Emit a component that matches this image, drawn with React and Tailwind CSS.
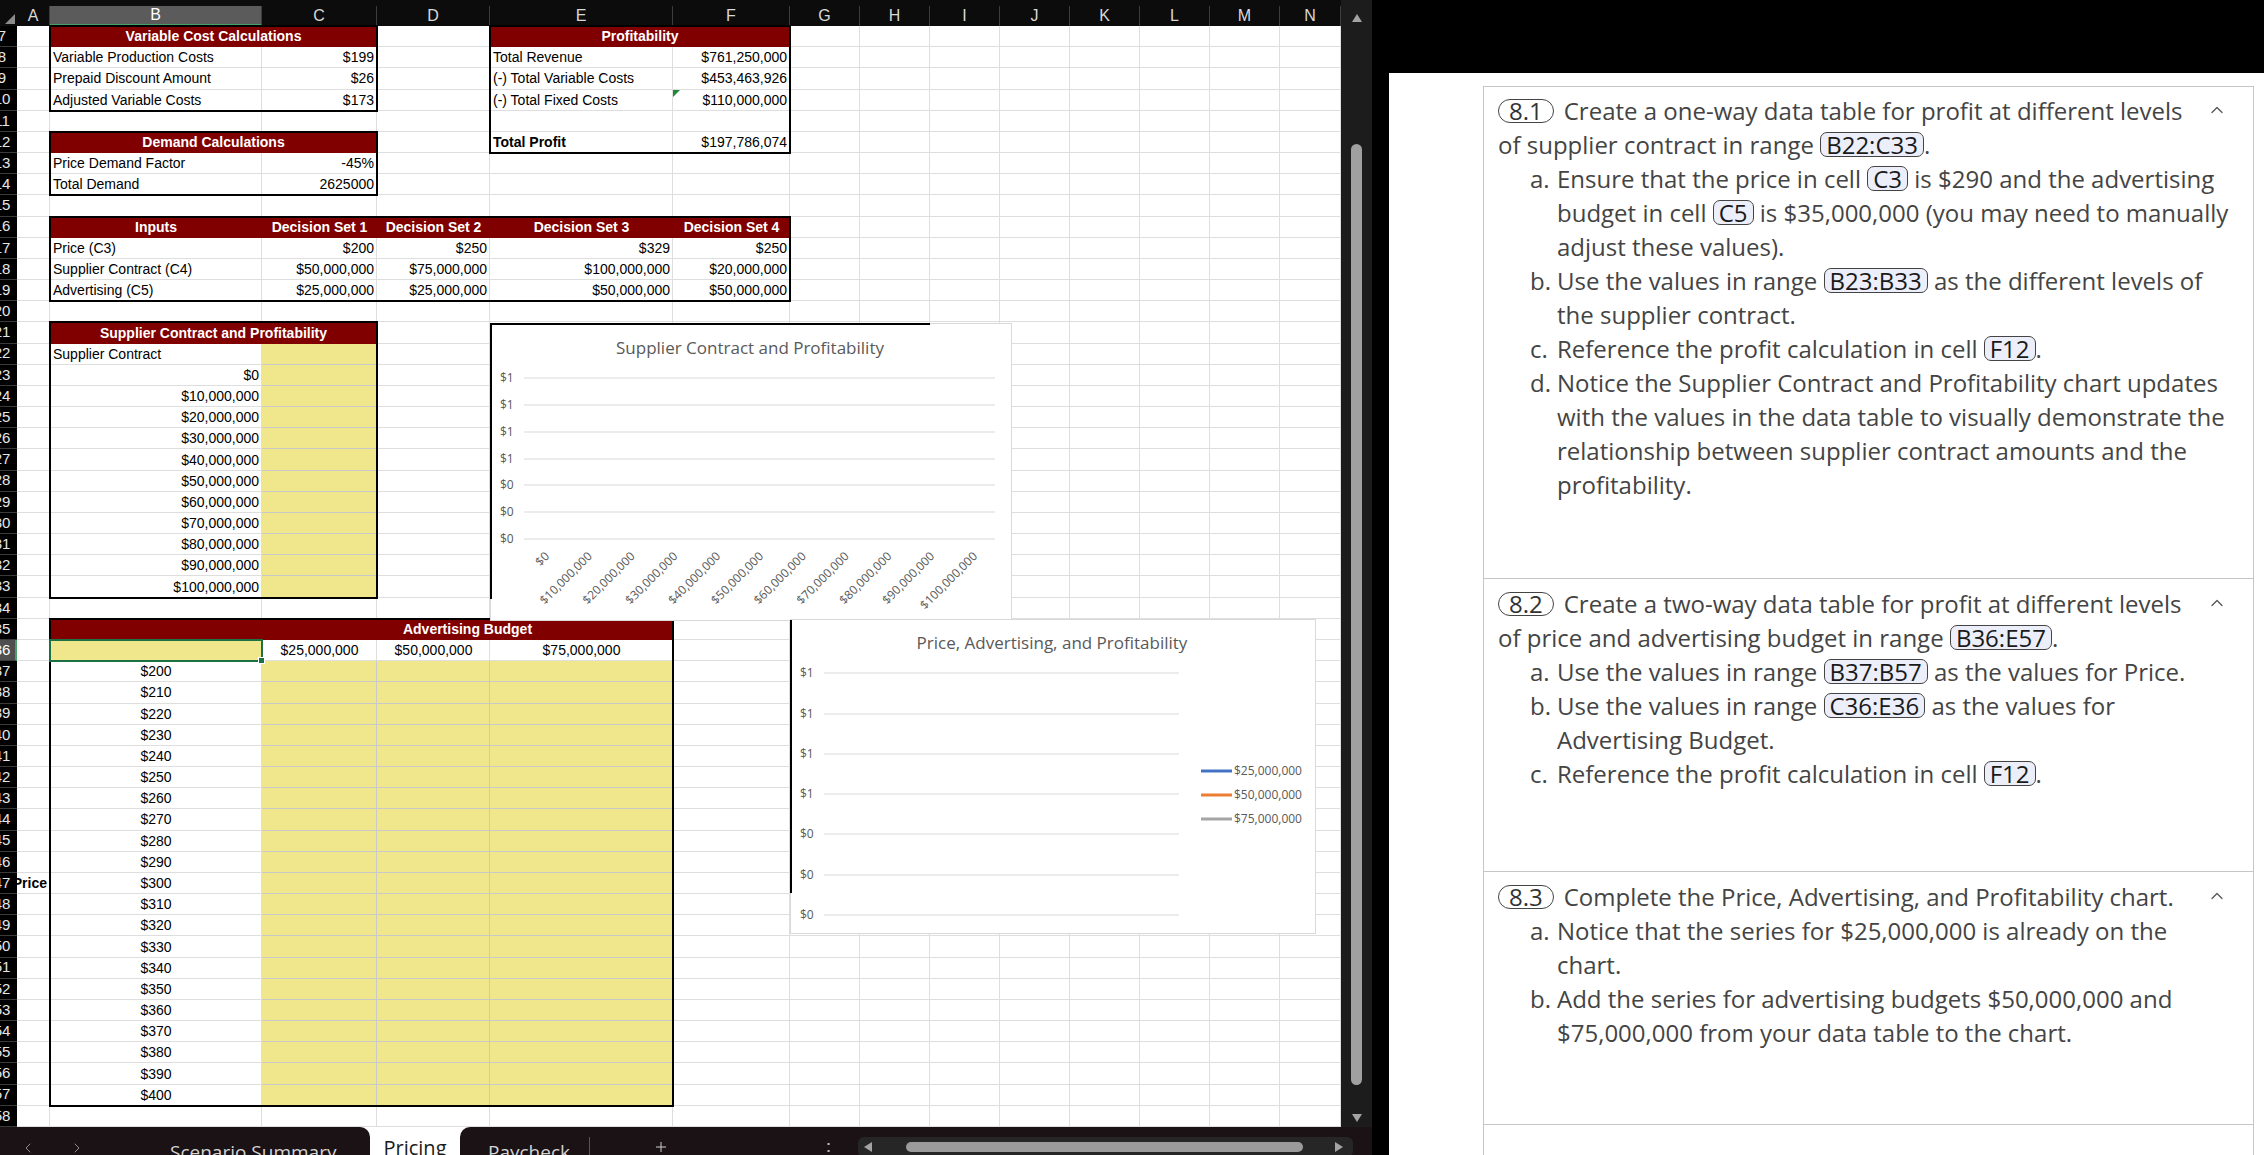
import React from 'react';
import { ChevronUp, ChevronLeft, ChevronRight, Plus } from 'lucide-react';

const COLS = ['A', 'B', 'C', 'D', 'E', 'F', 'G', 'H', 'I', 'J', 'K', 'L', 'M', 'N'];
const COL_W = {
  A: 'w-[33px]', B: 'w-[212px]', C: 'w-[115px]', D: 'w-[113px]', E: 'w-[183px]', F: 'w-[117px]',
  G: 'w-[70px]', H: 'w-[70px]', I: 'w-[70px]', J: 'w-[70px]', K: 'w-[70px]', L: 'w-[70px]', M: 'w-[70px]', N: 'w-[61px]',
};
const COL_START = {
  A: 'col-start-2', B: 'col-start-3', C: 'col-start-4', D: 'col-start-5', E: 'col-start-6', F: 'col-start-7',
  G: 'col-start-8', H: 'col-start-9', I: 'col-start-10', J: 'col-start-11', K: 'col-start-12', L: 'col-start-13',
  M: 'col-start-14', N: 'col-start-15',
};
const ROW_START = [
  'row-start-1', 'row-start-2', 'row-start-3', 'row-start-4', 'row-start-5', 'row-start-6', 'row-start-7',
  'row-start-8', 'row-start-9', 'row-start-10', 'row-start-11', 'row-start-12', 'row-start-13', 'row-start-14',
  'row-start-15', 'row-start-16', 'row-start-17', 'row-start-18', 'row-start-19', 'row-start-20', 'row-start-21',
  'row-start-22', 'row-start-23', 'row-start-24', 'row-start-25', 'row-start-26', 'row-start-27', 'row-start-28',
  'row-start-29', 'row-start-30', 'row-start-31', 'row-start-32', 'row-start-33', 'row-start-34', 'row-start-35',
  'row-start-36', 'row-start-37', 'row-start-38', 'row-start-39', 'row-start-40', 'row-start-41', 'row-start-42',
  'row-start-43', 'row-start-44', 'row-start-45', 'row-start-46', 'row-start-47', 'row-start-48', 'row-start-49',
  'row-start-50', 'row-start-51', 'row-start-52',
];
const rs = (r) => ROW_START[r - 7];
const ROWS = Array.from({ length: 52 }, (_, i) => i + 7);
const GRID =
  'grid grid-cols-[17px_33px_212px_115px_113px_183px_117px_70px_70px_70px_70px_70px_70px_70px_61px] grid-rows-[repeat(52,minmax(0,1fr))]';

const ALIGN = { l: 'justify-start pl-[3px]', r: 'justify-end pr-[3px]', c: 'justify-center' };

const CELLS = [
  { r: 8, c: 'B', t: 'Variable Production Costs' },
  { r: 8, c: 'C', t: '$199', a: 'r' },
  { r: 9, c: 'B', t: 'Prepaid Discount Amount' },
  { r: 9, c: 'C', t: '$26', a: 'r' },
  { r: 10, c: 'B', t: 'Adjusted Variable Costs' },
  { r: 10, c: 'C', t: '$173', a: 'r' },
  { r: 8, c: 'E', t: 'Total Revenue' },
  { r: 8, c: 'F', t: '$761,250,000', a: 'r' },
  { r: 9, c: 'E', t: '(-) Total Variable Costs' },
  { r: 9, c: 'F', t: '$453,463,926', a: 'r' },
  { r: 10, c: 'E', t: '(-) Total Fixed Costs' },
  { r: 10, c: 'F', t: '$110,000,000', a: 'r' },
  { r: 12, c: 'E', t: 'Total Profit', b: true },
  { r: 12, c: 'F', t: '$197,786,074', a: 'r' },
  { r: 13, c: 'B', t: 'Price Demand Factor' },
  { r: 13, c: 'C', t: '-45%', a: 'r' },
  { r: 14, c: 'B', t: 'Total Demand' },
  { r: 14, c: 'C', t: '2625000', a: 'r' },
  { r: 16, c: 'B', t: 'Inputs', a: 'c', h: true },
  { r: 16, c: 'C', t: 'Decision Set 1', a: 'c', h: true },
  { r: 16, c: 'D', t: 'Decision Set 2', a: 'c', h: true },
  { r: 16, c: 'E', t: 'Decision Set 3', a: 'c', h: true },
  { r: 16, c: 'F', t: 'Decision Set 4', a: 'c', h: true },
  { r: 17, c: 'B', t: 'Price (C3)' },
  { r: 17, c: 'C', t: '$200', a: 'r' },
  { r: 17, c: 'D', t: '$250', a: 'r' },
  { r: 17, c: 'E', t: '$329', a: 'r' },
  { r: 17, c: 'F', t: '$250', a: 'r' },
  { r: 18, c: 'B', t: 'Supplier Contract (C4)' },
  { r: 18, c: 'C', t: '$50,000,000', a: 'r' },
  { r: 18, c: 'D', t: '$75,000,000', a: 'r' },
  { r: 18, c: 'E', t: '$100,000,000', a: 'r' },
  { r: 18, c: 'F', t: '$20,000,000', a: 'r' },
  { r: 19, c: 'B', t: 'Advertising (C5)' },
  { r: 19, c: 'C', t: '$25,000,000', a: 'r' },
  { r: 19, c: 'D', t: '$25,000,000', a: 'r' },
  { r: 19, c: 'E', t: '$50,000,000', a: 'r' },
  { r: 19, c: 'F', t: '$50,000,000', a: 'r' },
  { r: 22, c: 'B', t: 'Supplier Contract' },
  { r: 36, c: 'C', t: '$25,000,000', a: 'c' },
  { r: 36, c: 'D', t: '$50,000,000', a: 'c' },
  { r: 36, c: 'E', t: '$75,000,000', a: 'c' },
  { r: 47, c: 'A', t: 'Price', a: 'r', b: true },
];
for (let i = 0; i <= 10; i++) {
  CELLS.push({ r: 23 + i, c: 'B', t: i === 0 ? '$0' : `$${i * 10},000,000`, a: 'r' });
}
for (let i = 0; i <= 20; i++) {
  CELLS.push({ r: 37 + i, c: 'B', t: `$${200 + i * 10}`, a: 'c' });
}

const YELLOW = [];
for (let r = 22; r <= 33; r++) YELLOW.push({ r, c: 'C' });
YELLOW.push({ r: 36, c: 'B' });
for (let r = 37; r <= 57; r++) ['C', 'D', 'E'].forEach((c) => YELLOW.push({ r, c }));

const Tri = ({ down }) => (
  <svg width="12" height="10" viewBox="0 0 12 10">
    <path d={down ? 'M1 1h10L6 9z' : 'M6 1l5 8H1z'} fill="#a3a3a3" />
  </svg>
);

function SupplierChart() {
  const ys = [55, 82, 109, 136, 162, 189, 216];
  const yl = ['$1', '$1', '$1', '$1', '$0', '$0', '$0'];
  const xl = ['$0', '$10,000,000', '$20,000,000', '$30,000,000', '$40,000,000', '$50,000,000', '$60,000,000', '$70,000,000', '$80,000,000', '$90,000,000', '$100,000,000'];
  return (
    <div className="col-start-6 col-span-7 row-start-15 row-span-14 self-start justify-self-start mt-[1px] w-[522px] h-[298px] bg-white">
      <svg width="522" height="298" className="block" fontFamily="'Open Sans', sans-serif">
        <rect x="0.5" y="0.5" width="521" height="297" fill="white" stroke="#d9d9d9" />
        <line x1="0" y1="1" x2="440" y2="1" stroke="#000" strokeWidth="2" />
        <line x1="1" y1="0" x2="1" y2="276" stroke="#000" strokeWidth="2" />
        <text x="260" y="31" textAnchor="middle" fontSize="17" fill="#595959">Supplier Contract and Profitability</text>
        {ys.map((y, i) => (
          <g key={i}>
            <line x1="34" x2="505" y1={y} y2={y} stroke="#d9d9d9" />
            <text x="10" y={y + 4} fontSize="12" fill="#595959">{yl[i]}</text>
          </g>
        ))}
        {xl.map((t, i) => {
          const x = 60 + i * 42.8;
          return (
            <text key={i} x={x} y={234} textAnchor="end" fontSize="12" fill="#595959" transform={`rotate(-45 ${x} 234)`}>{t}</text>
          );
        })}
      </svg>
    </div>
  );
}

function PriceChart() {
  const ys = [54, 95, 135, 175, 215, 256, 296];
  const yl = ['$1', '$1', '$1', '$1', '$0', '$0', '$0'];
  const legend = [['#4472c4', '$25,000,000'], ['#ed7d31', '$50,000,000'], ['#a5a5a5', '$75,000,000']];
  return (
    <div className="col-start-8 col-span-8 row-start-29 row-span-16 self-start justify-self-start w-[526px] h-[315px] bg-white">
      <svg width="526" height="315" className="block" fontFamily="'Open Sans', sans-serif">
        <rect x="0.5" y="0.5" width="525" height="314" fill="white" stroke="#d9d9d9" />
        <line x1="1" y1="1" x2="1" y2="274" stroke="#000" strokeWidth="2" />
        <text x="262" y="30" textAnchor="middle" fontSize="17" fill="#595959">Price, Advertising, and Profitability</text>
        {ys.map((y, i) => (
          <g key={i}>
            <line x1="34" x2="389" y1={y} y2={y} stroke="#d9d9d9" />
            <text x="10" y={y + 4} fontSize="12" fill="#595959">{yl[i]}</text>
          </g>
        ))}
        {legend.map(([col, t], i) => (
          <g key={t}>
            <line x1="411" x2="442" y1={152 + i * 24} y2={152 + i * 24} stroke={col} strokeWidth="3" />
            <text x="444" y={156 + i * 24} fontSize="12" fill="#595959">{t}</text>
          </g>
        ))}
      </svg>
    </div>
  );
}

const Badge = ({ children }) => (
  <span className="inline-block rounded-full border-[1.5px] border-[#444] bg-white px-[10px] leading-[22px] text-[#333] mr-[10px]">{children}</span>
);
const Ref = ({ children }) => (
  <span className="inline-block rounded-[7px] border-[1.5px] border-[#444] bg-[#eceff9] px-[5px] leading-[23px] text-[#1a1a1a]">{children}</span>
);

const Item = ({ m, children }) => (
  <div className="flex ml-[32px]">
    <span className="w-[27px] shrink-0">{m}</span>
    <p className="flex-1">{children}</p>
  </div>
);

const Title = ({ n, children }) => (
  <div className="flex">
    <p className="flex-1">
      <Badge>{n}</Badge>
      {children}
    </p>
    <div className="w-[44px] -mr-[8px] flex justify-center pt-[6px] text-[#555]">
      <ChevronUp size={20} strokeWidth={1.5} />
    </div>
  </div>
);

export default function App() {
  return (
    <div className="flex w-[2264px] h-[1155px] overflow-hidden bg-black">
      {/* spreadsheet */}
      <div className="w-[1372px] shrink-0 flex flex-col">
        <div className="flex h-[1127px]">
          <div className="w-[1341px] flex flex-col font-['Liberation_Sans',Arial,sans-serif]">
            <div className="flex h-[26px] bg-[#0c0c0c] items-end">
              <div className="w-[17px] h-[20px] flex items-end justify-end pr-[2px] pb-[2px]">
                <svg width="10" height="10"><path d="M10 0v10H0z" fill="#8a8a8a" /></svg>
              </div>
              {COLS.map((c) => (
                <div
                  key={c}
                  className={`${COL_W[c]} h-[20px] flex items-center justify-center border-r border-[#3d3d3d] text-[16px] leading-none ${
                    c === 'B' ? 'bg-[#5b5b5b] border-b-2 border-b-[#46a06a] text-white' : 'text-[#d9d9d9]'
                  }`}
                >
                  {c}
                </div>
              ))}
            </div>
            <div className="grid h-[1101px] text-[14px] text-black">
              <div className={`${GRID} col-start-1 row-start-1 h-[1101px]`}>
                {ROWS.map((r) => (
                  <React.Fragment key={r}>
                    <div
                      className={`flex items-center overflow-hidden border-b border-[#3a3a3a] text-[15px] ${
                        r === 36 ? 'bg-[#4f4f4f] border-r-2 border-r-[#46a06a] text-white' : 'bg-black text-[#e6e6e6]'
                      }`}
                    >
                      <span className="w-[30px] ml-[-13px] shrink-0 text-center">{r}</span>
                    </div>
                    {COLS.map((c) => (
                      <div key={c} className="bg-white border-r border-b border-[#dedede]" />
                    ))}
                  </React.Fragment>
                ))}
              </div>
              <div className={`${GRID} col-start-1 row-start-1 h-[1101px]`}>
                {YELLOW.map(({ r, c }) => (
                  <div key={`y${c}${r}`} className={`${COL_START[c]} ${rs(r)} bg-[#f0e68c] border-r border-b border-[#c9c9c9]`} />
                ))}
                <div className="col-start-3 col-span-2 row-start-1 bg-[#800000] flex items-center justify-center font-bold text-white">Variable Cost Calculations</div>
                <div className="col-start-6 col-span-2 row-start-1 bg-[#800000] flex items-center justify-center font-bold text-white">Profitability</div>
                <div className="col-start-3 col-span-2 row-start-6 bg-[#800000] flex items-center justify-center font-bold text-white">Demand Calculations</div>
                <div className="col-start-3 col-span-5 row-start-10 bg-[#800000]" />
                <div className="col-start-3 col-span-2 row-start-15 bg-[#800000] flex items-center justify-center font-bold text-white">Supplier Contract and Profitability</div>
                <div className="col-start-3 col-span-4 row-start-29 bg-[#800000]" />
                <div className="col-start-4 col-span-3 row-start-29 flex items-center justify-center font-bold text-white">Advertising Budget</div>
                {CELLS.map(({ r, c, t, a = 'l', b, h }) => (
                  <div
                    key={`${c}${r}`}
                    className={`${COL_START[c]} ${rs(r)} flex items-center min-w-0 whitespace-nowrap overflow-hidden ${ALIGN[a]} ${b || h ? 'font-bold' : ''} ${h ? 'text-white' : 'text-black'}`}
                  >
                    {t}
                  </div>
                ))}
                <div className="col-start-7 row-start-4 relative">
                  <div className="absolute top-0 left-0 w-0 h-0 border-t-[7px] border-r-[7px] border-t-[#1f8a36] border-r-transparent" />
                </div>
                <div className="col-start-3 col-span-2 row-start-1 row-span-4 -m-px border-2 border-black pointer-events-none" />
                <div className="col-start-6 col-span-2 row-start-1 row-span-6 -m-px border-2 border-black pointer-events-none" />
                <div className="col-start-3 col-span-2 row-start-6 row-span-3 -m-px border-2 border-black pointer-events-none" />
                <div className="col-start-3 col-span-5 row-start-10 row-span-4 -m-px border-2 border-black pointer-events-none" />
                <div className="col-start-3 col-span-2 row-start-15 row-span-13 -m-px border-2 border-black pointer-events-none" />
                <div className="col-start-3 col-span-4 row-start-29 row-span-23 -m-px border-2 border-black pointer-events-none" />
                <div className="col-start-3 row-start-30 -m-px border-2 border-[#1e7145] relative pointer-events-none">
                  <div className="absolute -right-[4px] -bottom-[4px] w-[7px] h-[7px] bg-[#1e7145] border border-white" />
                </div>
                <SupplierChart />
                <PriceChart />
              </div>
            </div>
          </div>
          <div className="w-[31px] bg-[#1c1c1c] flex flex-col items-center">
            <div className="mt-[13px]"><Tri /></div>
            <div className="mt-[121px] w-[11px] h-[941px] rounded-full bg-[#a0a0a0]" />
            <div className="mt-[28px]"><Tri down /></div>
          </div>
        </div>
        {/* sheet tabs */}
        <div className="flex h-[28px] bg-white font-['Open_Sans',sans-serif] text-[19px] leading-[26px] text-[#d4d4d4]">
          <div className="w-[370px] shrink-0 bg-[#1b1216] rounded-tr-[10px] flex items-start">
            <ChevronLeft className="ml-[20px] mt-[13px] text-[#8c8c8c]" size={16} strokeWidth={1.5} />
            <ChevronRight className="ml-[33px] mt-[13px] text-[#8c8c8c]" size={16} strokeWidth={1.5} />
            <span className="ml-[85px] mt-[12px] whitespace-nowrap">Scenario Summary</span>
          </div>
          <div className="w-[90px] shrink-0 flex justify-center">
            <span className="mt-[8px] text-[20px] text-[#1a1a1a]">Pricing</span>
          </div>
          <div className="flex-1 bg-[#1b1216] rounded-tl-[10px] flex items-start">
            <span className="ml-[28px] mt-[12px]">Paycheck</span>
            <div className="ml-[19px] mt-[10px] w-px h-[18px] bg-[#555]" />
            <Plus className="ml-[63px] mt-[12px] text-[#cfcfcf]" size={16} strokeWidth={1.5} />
            <span className="ml-[150px] mt-[10px] text-[#bdbdbd]">⋮</span>
            <div className="ml-[20px] mt-[10px] w-[495px] h-[20px] rounded-[6px] bg-[#262626] flex items-center">
              <svg className="ml-[6px]" width="8" height="10"><path d="M8 0v10L0 5z" fill="#a3a3a3" /></svg>
              <div className="ml-[34px] w-[397px] h-[10px] rounded-full bg-[#9b9b9b]" />
              <svg className="ml-[32px]" width="8" height="10"><path d="M0 0v10l8-5z" fill="#a3a3a3" /></svg>
            </div>
          </div>
        </div>
      </div>
      <div className="w-[17px] shrink-0 bg-black" />
      {/* instructions panel */}
      <div className="flex-1 flex flex-col bg-black">
        <div className="h-[73px] shrink-0" />
        <div className="flex-1 bg-white pl-[94px] pr-[10px] pt-[13px] flex flex-col font-['Open_Sans',sans-serif] text-[24px] leading-[34px] text-[#444]">
          <div className="flex-1 border-l border-r border-t border-[#c6c6c6] flex flex-col">
            <div className="h-[492px] shrink-0 border-b border-[#c6c6c6] pl-[14px] pr-[22px] pt-[7px]">
              <Title n="8.1">
                Create a one-way data table for profit at different levels of supplier contract in range <Ref>B22:C33</Ref>.
              </Title>
              <Item m="a.">
                Ensure that the price in cell <Ref>C3</Ref> is $290 and the advertising budget in cell <Ref>C5</Ref> is $35,000,000 (you may need to manually adjust these values).
              </Item>
              <Item m="b.">
                Use the values in range <Ref>B23:B33</Ref> as the different levels of the supplier contract.
              </Item>
              <Item m="c.">
                Reference the profit calculation in cell <Ref>F12</Ref>.
              </Item>
              <Item m="d.">
                Notice the Supplier Contract and Profitability chart updates with the values in the data table to visually demonstrate the relationship between supplier contract amounts and the profitability.
              </Item>
            </div>
            <div className="h-[293px] shrink-0 border-b border-[#c6c6c6] pl-[14px] pr-[22px] pt-[8px]">
              <Title n="8.2">
                Create a two-way data table for profit at different levels of price and advertising budget in range <Ref>B36:E57</Ref>.
              </Title>
              <Item m="a.">
                Use the values in range <Ref>B37:B57</Ref> as the values for Price.
              </Item>
              <Item m="b.">
                Use the values in range <Ref>C36:E36</Ref> as the values for Advertising Budget.
              </Item>
              <Item m="c.">
                Reference the profit calculation in cell <Ref>F12</Ref>.
              </Item>
            </div>
            <div className="h-[253px] shrink-0 border-b border-[#c6c6c6] pl-[14px] pr-[22px] pt-[8px]">
              <Title n="8.3">Complete the Price, Advertising, and Profitability chart.</Title>
              <Item m="a.">Notice that the series for $25,000,000 is already on the chart.</Item>
              <Item m="b.">Add the series for advertising budgets $50,000,000 and $75,000,000 from your data table to the chart.</Item>
            </div>
            <div className="flex-1" />
          </div>
        </div>
      </div>
    </div>
  );
}
